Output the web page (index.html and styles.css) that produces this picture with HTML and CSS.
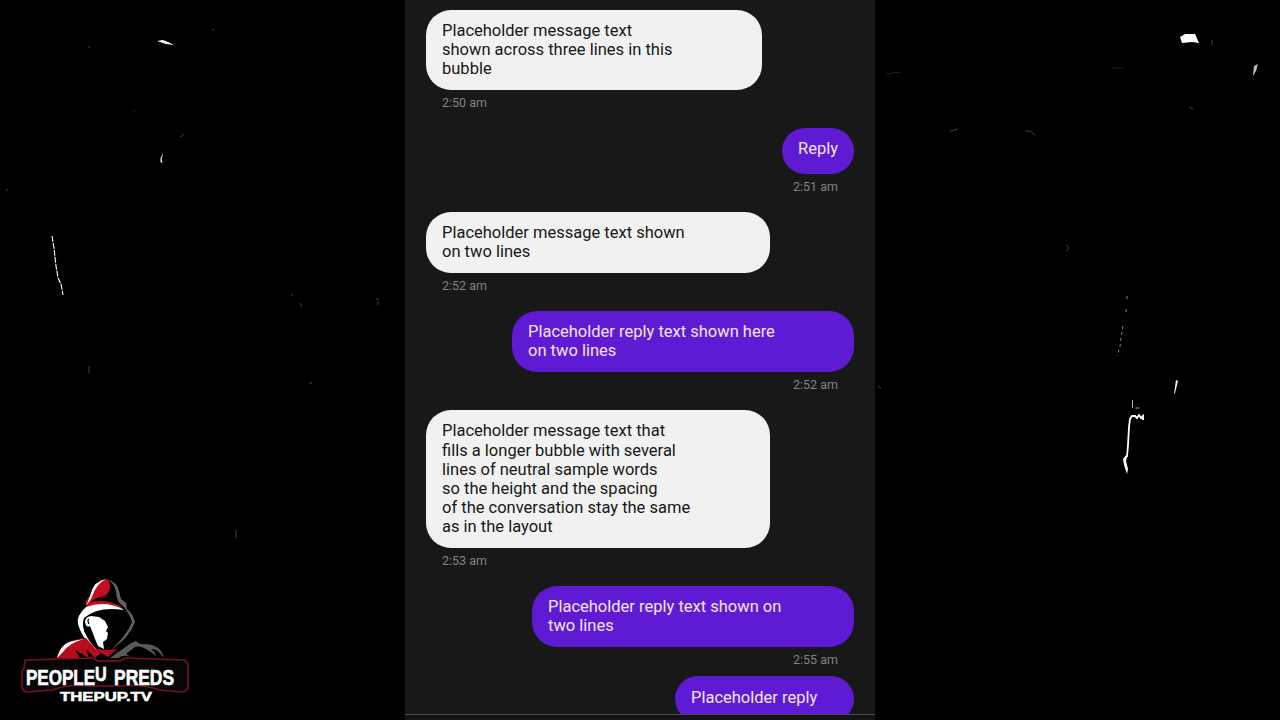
FILE: index.html
```html
<!DOCTYPE html>
<html lang="en">
<head>
<meta charset="utf-8">
<title>Chat</title>
<link rel="stylesheet" href="styles.css">
</head>
<body>
<main class="stage">
  <svg class="scratches" viewBox="0 0 1280 720" aria-hidden="true">
    <g fill="#fff">
      <path d="M157 41l6-1 5 2 6 3-8-1z"/>
      <path d="M1180 37l5-3h10l4 9-7-1-10 1z"/>
      <path d="M1254 66l4-2-2 7-3 5z" fill="#bbb"/>
      <path d="M163.500 153l-2 6 1 4-2-1v-4z"/>
      <path d="M1176 380l2 1-3 12-1 1z"/>
      <path d="M1123 459l3-4 1 2-1 4 2 8-1 5-3-9z"/>
    </g>
    <g fill="none" stroke="#fff">
      <path d="M52 236l2 12 2 18 2 12 3 6 2 11" stroke-dasharray="6 1" stroke-width="1.100"/>
      <path d="M1127 457l1-12 1-18 1-8 2-3h3l2 2 2-3 2 3 2-2v4" stroke-width="1.800"/>
      <path d="M1132.500 400v8m3 0h4" stroke="#aaa"/>
      <path d="M1127 296v6m-1 7v3m-3 14l-2 11-1 10-3 9" stroke="#888" stroke-dasharray="3 3"/>
      <path d="M180 137l4-3M300 303l2 4M376 299h3m-1 2v4M1212 40v5M1066 245l3 3-3 3M878 386l3 2M950 131l8-2M1025 131h5l5 4M236 530v8M89 366v7M1189 107l4 2M212 30h2M88 47h2M134 111h1M6 190h2M309 383h3M291 295h2" stroke="#444"/>
      <path d="M886 74l14-2M1112 68h12" stroke="#222"/>
    </g>
  </svg>

  <section class="chat">
    <article class="message received"><p class="bubble w336">Placeholder message text<br>shown across three lines in this<br>bubble</p><time>2:50 am</time></article>
    <article class="message sent"><p class="bubble w72">Reply</p><time>2:51 am</time></article>
    <article class="message received"><p class="bubble w344">Placeholder message text shown<br>on two lines</p><time>2:52 am</time></article>
    <article class="message sent"><p class="bubble w342">Placeholder reply text shown here<br>on two lines</p><time>2:52 am</time></article>
    <article class="message received"><p class="bubble w344">Placeholder message text that<br>fills a longer bubble with several<br>lines of neutral sample words<br>so the height and the spacing<br>of the conversation stay the same<br>as in the layout</p><time>2:53 am</time></article>
    <article class="message sent"><p class="bubble w322">Placeholder reply text shown on<br>two lines</p><time>2:55 am</time></article>
    <article class="message sent"><p class="bubble w179">Placeholder reply</p></article>
  </section>
  <div class="edge"></div>

  <svg class="logo" viewBox="0 0 190 145" role="img" aria-label="People U Preds, thepup.tv">
    <path d="M81 24Q84 13 96 9Q101 11 100 18Q98 27 90 27Q83 29 76 36L76 31Z" fill="#c40d20"/>
    <path d="M76 36Q78 32 81 23Q84 11 96 9Q86 14 82 27Q81 29 76 36Z" fill="#fff"/>
    <path d="M97 9Q107 12 109 21L111 29L116 33L117 39Q123 44 125 52Q120 67 101 80Q117 65 122 52Q119 43 114 37Q106 32 106 21Q104 13 97 9Z" fill="#616161"/>
    <path d="M78 33Q94 28 110 36L114 40Q94 33 76 39Z" fill="#c40d20"/>
    <path d="M76 37Q96 30 114 40Q88 36 74 48Q71 56 76 65Q81 75 90 82Q73 72 68 54Q66 46 76 37Z" fill="#fff"/>
    <path d="M81 46Q75 47 75 52Q76 58 80 56L82 61L85 69L88 76L94 79L93 72L97 69L98 63L96 61L98 57L95 51L89 47Z" fill="#fff"/>
    <path d="M79 49Q77 50 79 54" fill="none" stroke="#000" stroke-width="1.200"/>
    <path d="M47 88Q50 74 64 70L76 68L86 79L98 80L107 79L98 87L91 83L85 88L76 79L79 88L65 80L70 88Z" fill="#b50d1e"/>
    <path d="M47 88Q51 73 63 71L74 69Q59 73 53 82Z" fill="#fff"/>
    <path d="M100 88L121 73L126 71Q130 75 136 74Q151 75 154 88Q147 78 141 79Q146 83 146 86Q132 74 125 77L116 84L121 87Q114 84 108 88Z" fill="#595959"/>
    <path d="M15 90L83 88L88 91H110L115 88L175 90L178 94V116Q178 122 172 122L150 120Q132 114 111 116H76Q60 114 42 120L17 122Q12 121 12 116V101L14 98Z" fill="#060606" stroke="#7c1020" stroke-width="1.600"/>
    <g class="logo-text">
      <text transform="translate(16 115) scale(.91 1.230)" font-size="18" textLength="76" lengthAdjust="spacingAndGlyphs">PEOPLE</text>
      <text transform="translate(85 111) scale(.9 1.150)" font-size="18" textLength="13" lengthAdjust="spacingAndGlyphs">U</text>
      <text transform="translate(104 115) scale(.91 1.230)" font-size="18" textLength="66" lengthAdjust="spacingAndGlyphs">PREDS</text>
      <text x="50" y="131" font-size="13" textLength="92" lengthAdjust="spacingAndGlyphs" xml:space="preserve">THEPUP.TV</text>
    </g>
  </svg>
</main>
</body>
</html>
```
FILE: styles.css
```css
* { box-sizing: border-box; }
body { margin: 0; background: #000; font-family: Roboto, "Liberation Sans", sans-serif; }
.stage { position: relative; width: 1280px; height: 720px; overflow: hidden; background: #000; }
.scratches { position: absolute; inset: 0; width: 1280px; height: 720px; }
.chat {
  position: relative;
  display: flex;
  flex-direction: column;
  gap: 16.900px;
  width: 470px;
  height: 714px;
  margin-left: 405px;
  padding: 9.600px 21px 0;
  overflow: hidden;
  background: #181818;
}
.message { display: flex; flex: none; flex-direction: column; align-items: flex-start; }
.sent { align-items: flex-end; }
.bubble {
  min-height: 46px;
  margin: 0;
  padding: 11.400px 16px;
  border-radius: 25px;
  background: #f1f1f1;
  color: #171717;
  font-size: 16.500px;
  line-height: 19.200px;
  white-space: nowrap;
}
.sent .bubble { background: #5f1bd3; color: #f3e4fb; }
.w72 { width: 72px; }
.w179 { width: 179px; }
.w322 { width: 322px; }
.w336 { width: 336px; }
.w342 { width: 342px; }
.w344 { width: 344px; }
.message time { margin: 5px 16px 0; color: #838383; font-size: 12.500px; line-height: 16px; }
.message:last-child { margin-top: -8.600px; }
.edge { width: 470px; height: 6px; margin-left: 405px; border-top: 1px solid #4b4b4b; background: #141414; }
.logo { position: absolute; left: 10px; top: 570px; width: 190px; height: 145px; }
.logo-text { fill: #fff; font-family: "Liberation Sans", sans-serif; font-weight: 700; stroke: #fff; stroke-width: .5px; }
```
